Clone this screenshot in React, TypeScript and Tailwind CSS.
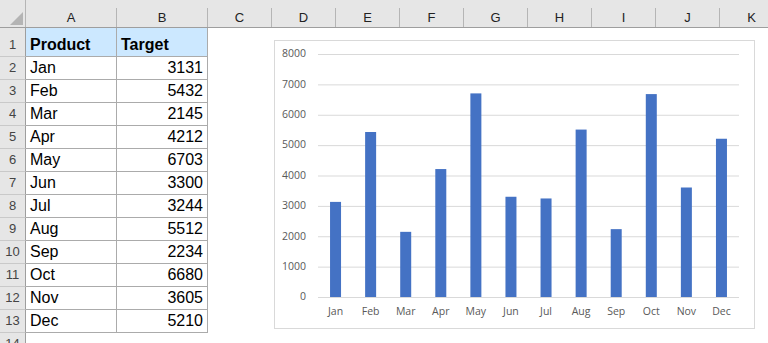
import React from "react";

const months: [string, number][] = [
  ["Jan", 3131],
  ["Feb", 5432],
  ["Mar", 2145],
  ["Apr", 4212],
  ["May", 6703],
  ["Jun", 3300],
  ["Jul", 3244],
  ["Aug", 5512],
  ["Sep", 2234],
  ["Oct", 6680],
  ["Nov", 3605],
  ["Dec", 5210],
];

const cols = [
  { label: "A", cls: "w-[91px]" },
  { label: "B", cls: "w-[91px]" },
  { label: "C", cls: "w-[64px]" },
  { label: "D", cls: "w-[64px]" },
  { label: "E", cls: "w-[64px]" },
  { label: "F", cls: "w-[64px]" },
  { label: "G", cls: "w-[64px]" },
  { label: "H", cls: "w-[64px]" },
  { label: "I", cls: "w-[64px]" },
  { label: "J", cls: "w-[64px]" },
  { label: "K", cls: "w-[64px]" },
];

// chart geometry, in svg coords
const X0 = 43;
const X1 = 464;
const YTOP = 13;
const Y0 = 256;
const MAX = 8000;

const BarChart = () => {
  const step = (X1 - X0) / months.length;
  const yOf = (v: number) => Y0 - (v / MAX) * (Y0 - YTOP);
  const ticks = [0, 1000, 2000, 3000, 4000, 5000, 6000, 7000, 8000];

  return (
    <svg width="479" height="287" className="block">
      {ticks.map((t) => (
        <g key={t}>
          <line x1={X0} x2={X1} y1={yOf(t) + 0.5} y2={yOf(t) + 0.5} stroke="#d9d9d9" strokeWidth="1" />
          <text
            x={31}
            y={yOf(t) + 0.5}
            textAnchor="end"
            dominantBaseline="middle"
            fontFamily="'Open Sans', sans-serif"
            fontSize="10.5"
            fill="#595959"
          >
            {t}
          </text>
        </g>
      ))}
      {months.map(([m, v], i) => {
        const cx = X0 + (i + 0.5) * step;
        return (
          <g key={m}>
            <rect x={cx - 5.5} y={yOf(v)} width="11" height={Y0 - yOf(v)} fill="#4472c4" />
            <text
              x={cx}
              y={271}
              textAnchor="middle"
              dominantBaseline="middle"
              fontFamily="'Open Sans', sans-serif"
              fontSize="10.5"
              fill="#595959"
            >
              {m}
            </text>
          </g>
        );
      })}
    </svg>
  );
};

const RowNum = ({ n, tall }: { n: number; tall?: boolean }) => (
  <div
    className={`w-[26px] ${tall ? "h-[29px]" : "h-[23px]"} shrink-0 bg-[#e6e6e6] border-r border-r-[#9e9e9e] border-b border-b-[#c9c9c9] flex items-end justify-center text-[13px] leading-[22px] text-[#444]`}
  >
    {n}
  </div>
);

export default function App() {
  return (
    <div
      className="w-[768px] h-[343px] overflow-hidden bg-white"
      style={{ fontFamily: "'Liberation Sans', Arial, sans-serif" }}
    >
      {/* column headers */}
      <div className="flex h-[28px] bg-[#e6e6e6] border-b border-b-[#9e9e9e]">
        <div className="w-[26px] shrink-0 border-r border-r-[#b5b5b5] relative">
          <svg width="26" height="27" className="absolute left-0 top-0">
            <polygon points="23,12 23,25 10,25" fill="#b4b4b4" />
          </svg>
        </div>
        {cols.map((c) => (
          <div
            key={c.label}
            className={`${c.cls} shrink-0 flex items-end`}
          >
            <div className="w-full h-[19px] border-r border-r-[#b5b5b5] flex items-center justify-center text-[13px] text-[#222]">
              {c.label}
            </div>
          </div>
        ))}
      </div>

      <div className="flex">
        {/* data table */}
        <div className="flex flex-col shrink-0">
          <div className="flex">
            <RowNum n={1} tall />
            <div className="w-[91px] h-[29px] bg-[#cce8ff] border-r border-b border-[#ababab] flex items-end px-[4px] text-[16px] leading-[22px] font-bold text-black">
              Product
            </div>
            <div className="w-[91px] h-[29px] bg-[#cce8ff] border-r border-b border-[#ababab] flex items-end px-[4px] text-[16px] leading-[22px] font-bold text-black">
              Target
            </div>
          </div>
          {months.map(([m, v], i) => (
            <div key={m} className="flex">
              <RowNum n={i + 2} />
              <div className="w-[91px] h-[23px] border-r border-b border-[#ababab] flex items-end px-[4px] text-[16px] leading-[22px] text-black">
                {m}
              </div>
              <div className="w-[91px] h-[23px] border-r border-b border-[#ababab] flex items-end justify-end px-[4px] text-[16px] leading-[22px] text-black">
                {v}
              </div>
            </div>
          ))}
          <div className="flex">
            <RowNum n={14} />
          </div>
        </div>

        {/* chart object */}
        <div className="ml-[66px] mt-[12px]">
          <div className="w-[481px] h-[289px] border border-[#d9d9d9] bg-white">
            <BarChart />
          </div>
        </div>
      </div>
    </div>
  );
}
